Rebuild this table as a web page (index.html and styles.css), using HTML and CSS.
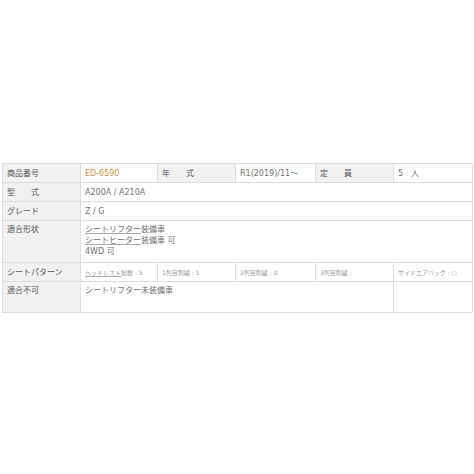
FILE: index.html
```html
<!DOCTYPE html>
<html lang="ja">
<head>
<meta charset="utf-8">
<link rel="stylesheet" href="styles.css">
</head>
<body>
<table class="spec">
  <colgroup>
    <col class="c1"><col class="c2"><col class="c3"><col class="c4"><col class="c5"><col class="c6">
  </colgroup>
  <tr class="r-std">
    <th>商品番号</th>
    <td class="code">ED-6590</td>
    <th>年　　式</th>
    <td>R1(2019)/11～</td>
    <th>定　　員</th>
    <td>5　人</td>
  </tr>
  <tr class="r-std">
    <th>型　　式</th>
    <td colspan="5">A200A / A210A</td>
  </tr>
  <tr class="r-std">
    <th>グレード</th>
    <td colspan="5">Z / G</td>
  </tr>
  <tr class="r-fit">
    <th class="top">適合形状</th>
    <td colspan="5" class="top lines"><span class="ul">シートリフター</span>装備車<br><span class="ul">シートヒーター</span>装備車 可<br>4WD 可</td>
  </tr>
  <tr class="r-std">
    <th>シートパターン</th>
    <td class="small"><span class="ul">ヘッドレスト</span>総数 : 5</td>
    <td class="small">1列目刺繍 : 1</td>
    <td class="small">2列目刺繍 : 0</td>
    <td class="small">3列目刺繍 : </td>
    <td class="small">サイドエアバッグ : ○</td>
  </tr>
  <tr class="r-ng">
    <th class="top">適合不可</th>
    <td colspan="4" class="top">シートリフター未装備車</td>
    <td></td>
  </tr>
</table>
</body>
</html>
```
FILE: styles.css
```css
html, body {
  margin: 0;
  padding: 0;
  background: #ffffff;
}
body {
  padding: 163px 0 0 2px;
  font-family: "DejaVu Sans", "Noto Sans CJK JP", sans-serif;
  font-size: 8px;
  color: #707070;
}
.spec {
  border-collapse: collapse;
  table-layout: fixed;
  width: 470px;
}
.c1 { width: 78px; }
.c2 { width: 77px; }
.c3 { width: 78px; }
.c4 { width: 80px; }
.c5 { width: 78px; }
.c6 { width: 79px; }
.spec th, .spec td {
  border: 1px solid #dddddd;
  padding: 0 4px;
  line-height: 11px;
  text-align: left;
  vertical-align: middle;
  white-space: nowrap;
  overflow: hidden;
}
.spec th {
  background: #f1f1f1;
  font-weight: normal;
  color: #555555;
}
.spec td {
  background: #ffffff;
}
.r-std { height: 19px; }
.r-fit { height: 42px; }
.r-ng { height: 31px; }
.spec .top {
  vertical-align: top;
  padding-top: 3px;
}
.code {
  color: #d8913c;
}
.small {
  font-size: 6px;
  color: #999999;
}
.ul {
  text-decoration: underline;
  text-decoration-color: #aaaaaa;
}
```
